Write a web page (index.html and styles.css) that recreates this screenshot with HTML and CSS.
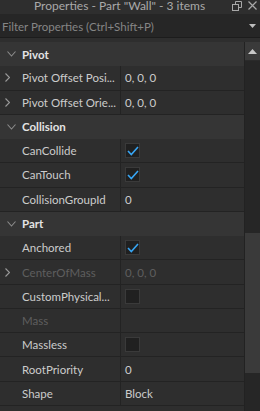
FILE: index.html
```html
<!DOCTYPE html>
<html lang="en">
  <head>
    <meta charset="UTF-8" />
    <meta name="viewport" content="width=device-width, initial-scale=1.0" />
    <title>Properties</title>
    <link rel="stylesheet" href="styles.css">
  </head>

  <body>
    <div class="panel">
      <div class="titlebar">
        <span class="title">Properties - Part "Wall" - 3 items</span>
        <span class="win-icons">
          <svg width="10" height="10" viewBox="0 0 10 10">
            <path d="M3.5 0.5h6v6h-2.5 M3.5 0.5v2.5" fill="none" stroke="#a8a8a8" stroke-width="1" />
            <rect x="0.5" y="3.5" width="6" height="6" fill="none" stroke="#a8a8a8" stroke-width="1" />
          </svg>
          <svg width="9" height="9" viewBox="0 0 9 9">
            <path d="M0.5 0.5L8.5 8.5M8.5 0.5L0.5 8.5" stroke="#a8a8a8" stroke-width="1.2" />
          </svg>
        </span>
      </div>

      <div class="filter">
        <span>Filter Properties (Ctrl+Shift+P)</span>
        <svg width="7" height="4" viewBox="0 0 7 4"><path d="M0 0h7L3.5 4z" fill="#bdbdbd" /></svg>
      </div>

      <div class="content">
        <div class="grid">
          <div class="row header">
            <span class="toggle"><svg width="9" height="6" viewBox="0 0 9 6"><path d="M0.5 0.5L4.5 5L8.5 0.5" fill="none" stroke="#8c8c8c" stroke-width="1.1" /></svg></span>
            <span>Pivot</span>
          </div>
          <div class="row">
            <div class="name"><span class="toggle"><svg width="5" height="9" viewBox="0 0 5 9"><path d="M0.5 0.5L4.5 4.5L0.5 8.5" fill="none" stroke="#9a9a9a" stroke-width="1.1" /></svg></span><span>Pivot Offset Posi...</span></div>
            <div class="val">0, 0, 0</div>
          </div>
          <div class="row">
            <div class="name"><span class="toggle"><svg width="5" height="9" viewBox="0 0 5 9"><path d="M0.5 0.5L4.5 4.5L0.5 8.5" fill="none" stroke="#9a9a9a" stroke-width="1.1" /></svg></span><span>Pivot Offset Orie...</span></div>
            <div class="val">0, 0, 0</div>
          </div>

          <div class="row header">
            <span class="toggle"><svg width="9" height="6" viewBox="0 0 9 6"><path d="M0.5 0.5L4.5 5L8.5 0.5" fill="none" stroke="#8c8c8c" stroke-width="1.1" /></svg></span>
            <span>Collision</span>
          </div>
          <div class="row">
            <div class="name"><span class="toggle"></span><span>CanCollide</span></div>
            <div class="val"><span class="check on"><svg width="12" height="10" viewBox="0 0 12 10"><path d="M1 5L4.3 8.5L11 1" fill="none" stroke="#37a6f5" stroke-width="1.6" /></svg></span></div>
          </div>
          <div class="row">
            <div class="name"><span class="toggle"></span><span>CanTouch</span></div>
            <div class="val"><span class="check on"><svg width="12" height="10" viewBox="0 0 12 10"><path d="M1 5L4.3 8.5L11 1" fill="none" stroke="#37a6f5" stroke-width="1.6" /></svg></span></div>
          </div>
          <div class="row">
            <div class="name"><span class="toggle"></span><span>CollisionGroupId</span></div>
            <div class="val">0</div>
          </div>

          <div class="row header">
            <span class="toggle"><svg width="9" height="6" viewBox="0 0 9 6"><path d="M0.5 0.5L4.5 5L8.5 0.5" fill="none" stroke="#8c8c8c" stroke-width="1.1" /></svg></span>
            <span>Part</span>
          </div>
          <div class="row">
            <div class="name"><span class="toggle"></span><span>Anchored</span></div>
            <div class="val"><span class="check on"><svg width="12" height="10" viewBox="0 0 12 10"><path d="M1 5L4.3 8.5L11 1" fill="none" stroke="#37a6f5" stroke-width="1.6" /></svg></span></div>
          </div>
          <div class="row disabled">
            <div class="name"><span class="toggle"><svg width="5" height="9" viewBox="0 0 5 9"><path d="M0.5 0.5L4.5 4.5L0.5 8.5" fill="none" stroke="#9a9a9a" stroke-width="1.1" /></svg></span><span>CenterOfMass</span></div>
            <div class="val">0, 0, 0</div>
          </div>
          <div class="row">
            <div class="name"><span class="toggle"></span><span>CustomPhysical...</span></div>
            <div class="val"><span class="check"></span></div>
          </div>
          <div class="row disabled">
            <div class="name"><span class="toggle"></span><span>Mass</span></div>
            <div class="val"></div>
          </div>
          <div class="row">
            <div class="name"><span class="toggle"></span><span>Massless</span></div>
            <div class="val"><span class="check"></span></div>
          </div>
          <div class="row">
            <div class="name"><span class="toggle"></span><span>RootPriority</span></div>
            <div class="val">0</div>
          </div>
          <div class="row">
            <div class="name"><span class="toggle"></span><span>Shape</span></div>
            <div class="val">Block</div>
          </div>
        </div>

        <div class="scrollbar">
          <div class="scroll-up"><svg width="9" height="5" viewBox="0 0 9 5"><path d="M0 5L4.5 0L9 5z" fill="#c8c8c8" /></svg></div>
          <div class="track"><div class="thumb"></div></div>
        </div>
      </div>
    </div>
  </body>
</html>
```

FILE: styles.css
```css
* {
  margin: 0;
  padding: 0;
  box-sizing: border-box;
  font-family: Lato, "Noto Sans", sans-serif;
}

body {
  background-color: #2e2e2e;
  width: 260px;
  height: 411px;
  overflow: hidden;
}

.panel {
  display: flex;
  flex-direction: column;
  height: 411px;
}

.titlebar {
  height: 14px;
  display: flex;
  align-items: flex-start;
  background-color: #2e2e2e;
  color: #a9a9a9;
  font-size: 12px;
  line-height: 12px;
}

.title {
  flex: 1;
  padding-left: 34px;
}

.win-icons {
  display: flex;
  gap: 6px;
  padding: 1px 3px 0 0;
}

.filter {
  height: 24px;
  display: flex;
  align-items: center;
  justify-content: space-between;
  padding: 1px 4px 0 2px;
  background-color: #262626;
  border-bottom: 1px solid #1c1c1c;
  color: #858585;
  font-size: 11.5px;
}

.content {
  flex: 1;
  display: flex;
  padding-top: 4px;
  overflow: hidden;
}

.grid {
  width: 245px;
  border-right: 1px solid #222222;
}

.row {
  display: flex;
  align-items: stretch;
  height: 24.27px;
  border-bottom: 1px solid #232323;
  color: #cccccc;
  font-size: 11.5px;
}

.row.header {
  align-items: center;
  background-color: #353535;
  color: #e4e4e4;
  font-weight: 700;
  border-bottom: none;
}

.toggle {
  width: 22px;
  flex-shrink: 0;
  display: flex;
  align-items: center;
  justify-content: center;
}

.row .name .toggle {
  justify-content: flex-start;
  padding-left: 5px;
}

.name {
  width: 121px;
  display: flex;
  align-items: center;
  border-right: 1px solid #232323;
  white-space: nowrap;
  overflow: hidden;
}

.val {
  flex: 1;
  display: flex;
  align-items: center;
  padding-left: 4px;
}

.row.disabled {
  color: #5e5e5e;
}

.check {
  width: 15px;
  height: 15px;
  display: flex;
  align-items: center;
  justify-content: center;
  background-color: #202020;
  border: 1px solid #3a3a3a;
}

.scrollbar {
  width: 15px;
  display: flex;
  flex-direction: column;
}

.scroll-up {
  height: 19px;
  display: flex;
  align-items: center;
  justify-content: center;
  background-color: #3a3a3a;
  border-bottom: 1px solid #2a2a2a;
}

.track {
  flex: 1;
  background-color: #262626;
  padding-top: 172px;
}

.thumb {
  height: 140px;
  background-color: #3a3a3a;
}
```
